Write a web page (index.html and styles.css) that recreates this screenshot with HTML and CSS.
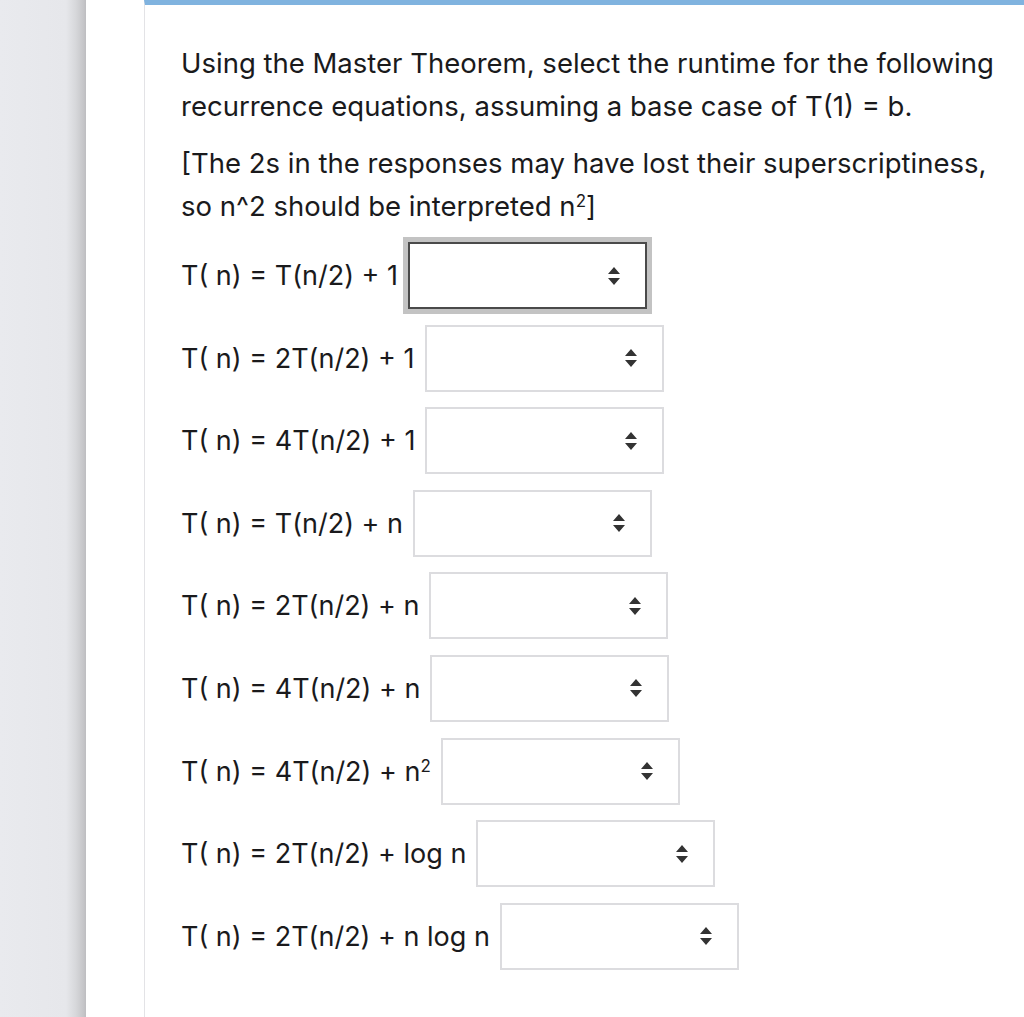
FILE: index.html
```html
<!DOCTYPE html>
<html>
<head>
<meta charset="utf-8">
<link rel="stylesheet" href="styles.css">
</head>
<body>
<div class="page">
  <div class="sidebar"></div>
  <div class="gutter"></div>
  <div class="panel">
    <div class="content">
      <p class="para">Using the Master Theorem, select the runtime for the following recurrence equations, assuming a base case of T(1) = b.</p>
      <p class="para">[The 2s in the responses may have lost their superscriptiness, so n^2 should be interpreted n<sup>2</sup>]</p>
      <div class="rows">
        <div class="row"><span class="label">T( n) = T(n/2) + 1</span><div class="select focused"><svg class="arrow" width="12" height="18" viewBox="0 0 12 18"><path d="M6 0 L12 7 L0 7 Z M0 11 L12 11 L6 18 Z" fill="#333"/></svg></div></div>
        <div class="row"><span class="label">T( n) = 2T(n/2) + 1</span><div class="select"><svg class="arrow" width="12" height="18" viewBox="0 0 12 18"><path d="M6 0 L12 7 L0 7 Z M0 11 L12 11 L6 18 Z" fill="#333"/></svg></div></div>
        <div class="row"><span class="label">T( n) = 4T(n/2) + 1</span><div class="select"><svg class="arrow" width="12" height="18" viewBox="0 0 12 18"><path d="M6 0 L12 7 L0 7 Z M0 11 L12 11 L6 18 Z" fill="#333"/></svg></div></div>
        <div class="row"><span class="label">T( n) = T(n/2) + n</span><div class="select"><svg class="arrow" width="12" height="18" viewBox="0 0 12 18"><path d="M6 0 L12 7 L0 7 Z M0 11 L12 11 L6 18 Z" fill="#333"/></svg></div></div>
        <div class="row"><span class="label">T( n) = 2T(n/2) + n</span><div class="select"><svg class="arrow" width="12" height="18" viewBox="0 0 12 18"><path d="M6 0 L12 7 L0 7 Z M0 11 L12 11 L6 18 Z" fill="#333"/></svg></div></div>
        <div class="row"><span class="label">T( n) = 4T(n/2) + n</span><div class="select"><svg class="arrow" width="12" height="18" viewBox="0 0 12 18"><path d="M6 0 L12 7 L0 7 Z M0 11 L12 11 L6 18 Z" fill="#333"/></svg></div></div>
        <div class="row"><span class="label">T( n) = 4T(n/2) + n<sup>2</sup></span><div class="select"><svg class="arrow" width="12" height="18" viewBox="0 0 12 18"><path d="M6 0 L12 7 L0 7 Z M0 11 L12 11 L6 18 Z" fill="#333"/></svg></div></div>
        <div class="row"><span class="label">T( n) = 2T(n/2) + log n</span><div class="select"><svg class="arrow" width="12" height="18" viewBox="0 0 12 18"><path d="M6 0 L12 7 L0 7 Z M0 11 L12 11 L6 18 Z" fill="#333"/></svg></div></div>
        <div class="row"><span class="label">T( n) = 2T(n/2) + n log n</span><div class="select"><svg class="arrow" width="12" height="18" viewBox="0 0 12 18"><path d="M6 0 L12 7 L0 7 Z M0 11 L12 11 L6 18 Z" fill="#333"/></svg></div></div>
      </div>
    </div>
  </div>
</div>
</body>
</html>
```
FILE: styles.css
```css
html, body {
  margin: 0;
  padding: 0;
  background: #ffffff;
}
body {
  font-family: Inter, "Liberation Sans", Arial, sans-serif;
  color: #1a1a1c;
}
.page {
  display: flex;
  height: 1017px;
  overflow: hidden;
}
.sidebar {
  width: 86px;
  flex: none;
  background: linear-gradient(to right, #e9eaee 0px, #e6e7eb 66px, #d6d7da 76px, #c4c4c7 84px, #bdbdc0 86px);
}
.gutter {
  width: 58px;
  flex: none;
  background: #ffffff;
}
.panel {
  flex: 1;
  border-left: 1px solid #e3e3e6;
  border-top: 5px solid #80b3df;
  background: #ffffff;
}
.content {
  padding: 37px 20px 0 36px;
}
.para {
  margin: 0 0 14px 0;
  font-size: 27.5px;
  line-height: 43px;
}
sup {
  font-size: 17px;
  line-height: 1;
  vertical-align: 0.55em;
}
.rows {
  display: flex;
  flex-direction: column;
  gap: 15.6px;
}
.row {
  display: flex;
  align-items: center;
}
.label {
  font-size: 27px;
  line-height: 43px;
}
.select {
  margin-left: 10px;
  width: 239px;
  height: 67px;
  box-sizing: border-box;
  border: 2px solid #dcdcdf;
  background: #ffffff;
  display: flex;
  align-items: center;
  justify-content: flex-end;
  padding-right: 25px;
}
.select.focused {
  border: 2px solid #4a4a4a;
  outline: 5px solid #c3c3c3;
}
.arrow {
  display: block;
}
```
